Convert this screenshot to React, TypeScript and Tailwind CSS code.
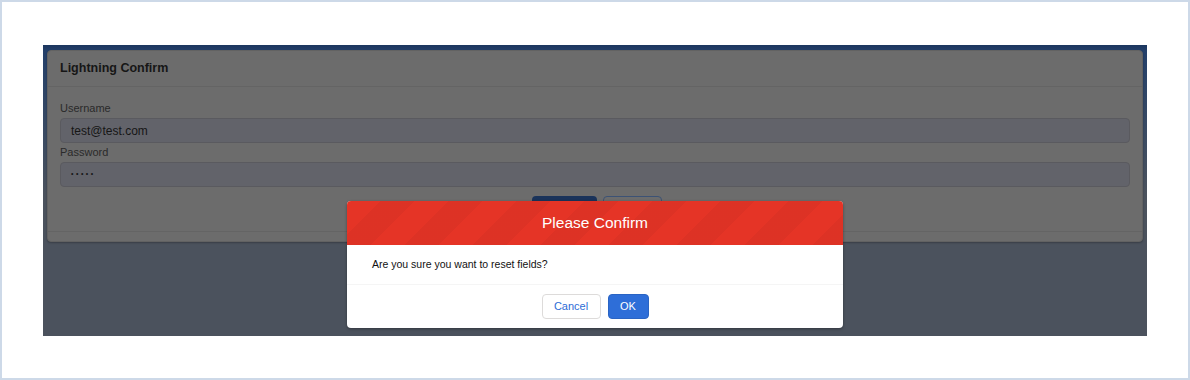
import React from "react";

export default function App() {
  const font = { fontFamily: '"Liberation Sans", Arial, sans-serif' };
  return (
    <div
      className="w-[1190px] h-[380px] border-2 border-[#cdd9e8] bg-white pl-[41px] pt-[43px]"
      style={font}
    >
      <div className="relative w-[1104px] h-[291px] bg-[linear-gradient(180deg,#1b365e_0px,#24406a_6px,#4b525d_150px,#4b525d_100%)] pt-[5px] px-[4px] overflow-hidden">
        {/* card */}
        <div className="h-[192px] rounded-[4px] bg-[#6c6c6c] border border-[#626262] shadow-[0_1px_2px_rgba(0,0,0,0.25)] flex flex-col">
          <div className="h-[36px] flex items-center px-[12px] border-b border-[#646464]">
            <span className="text-[12.5px] font-bold text-[#161616]">Lightning Confirm</span>
          </div>
          <div className="px-[12px] pt-[14px] flex flex-col">
            <label className="text-[11px] text-[#2a2a2a] leading-[14px]">Username</label>
            <div className="mt-[3px] h-[25px] rounded-[4px] bg-[#62636a] border border-[#5a5a5f] flex items-center px-[10px] text-[12px] text-[#161616]">
              test@test.com
            </div>
            <label className="mt-[2px] text-[11px] text-[#2a2a2a] leading-[14px]">Password</label>
            <div className="mt-[3px] h-[25px] rounded-[4px] bg-[#62636a] border border-[#5a5a5f] flex items-center px-[10px] text-[7px] text-[#161616] tracking-[2.5px]">
              •••••
            </div>
            <div className="mt-[9px] flex justify-center gap-[6px] pl-[4px]">
              <div className="w-[65px] h-[26px] rounded-[4px] bg-[#1a335a]" />
              <div className="w-[59px] h-[26px] rounded-[4px] border border-[#3c5275] bg-[#6c6c6c]" />
            </div>
          </div>
          <div className="mt-auto mb-[9px] border-t border-[#646464]" />
        </div>

        {/* modal */}
        <div className="absolute left-[304px] top-[156px] w-[496px] h-[127px] rounded-[4px] bg-white overflow-hidden shadow-[0_1px_3px_rgba(0,0,0,0.35)] flex flex-col">
          <div className="h-[44px] bg-[#e53426] bg-[repeating-linear-gradient(135deg,rgba(255,255,255,0)_0px,rgba(255,255,255,0)_24px,rgba(0,0,0,0.035)_24px,rgba(0,0,0,0.035)_48px)] flex items-center justify-center">
            <span className="text-white text-[15.5px]">Please Confirm</span>
          </div>
          <div className="h-[40px] flex items-center px-[25px] border-b border-[#f5f5f5]">
            <span className="text-[10.5px] text-[#111111]">Are you sure you want to reset fields?</span>
          </div>
          <div className="flex-1 flex items-center justify-center gap-[7px] pb-[1px]">
            <button className="w-[59px] h-[25px] rounded-[4px] border border-[#dddbda] bg-white text-[#2d6cd6] text-[11px]">
              Cancel
            </button>
            <button className="w-[41px] h-[25px] rounded-[4px] border border-[#2a64c4] bg-[#2e6ed8] text-white text-[11px]">
              OK
            </button>
          </div>
        </div>
      </div>
    </div>
  );
}
